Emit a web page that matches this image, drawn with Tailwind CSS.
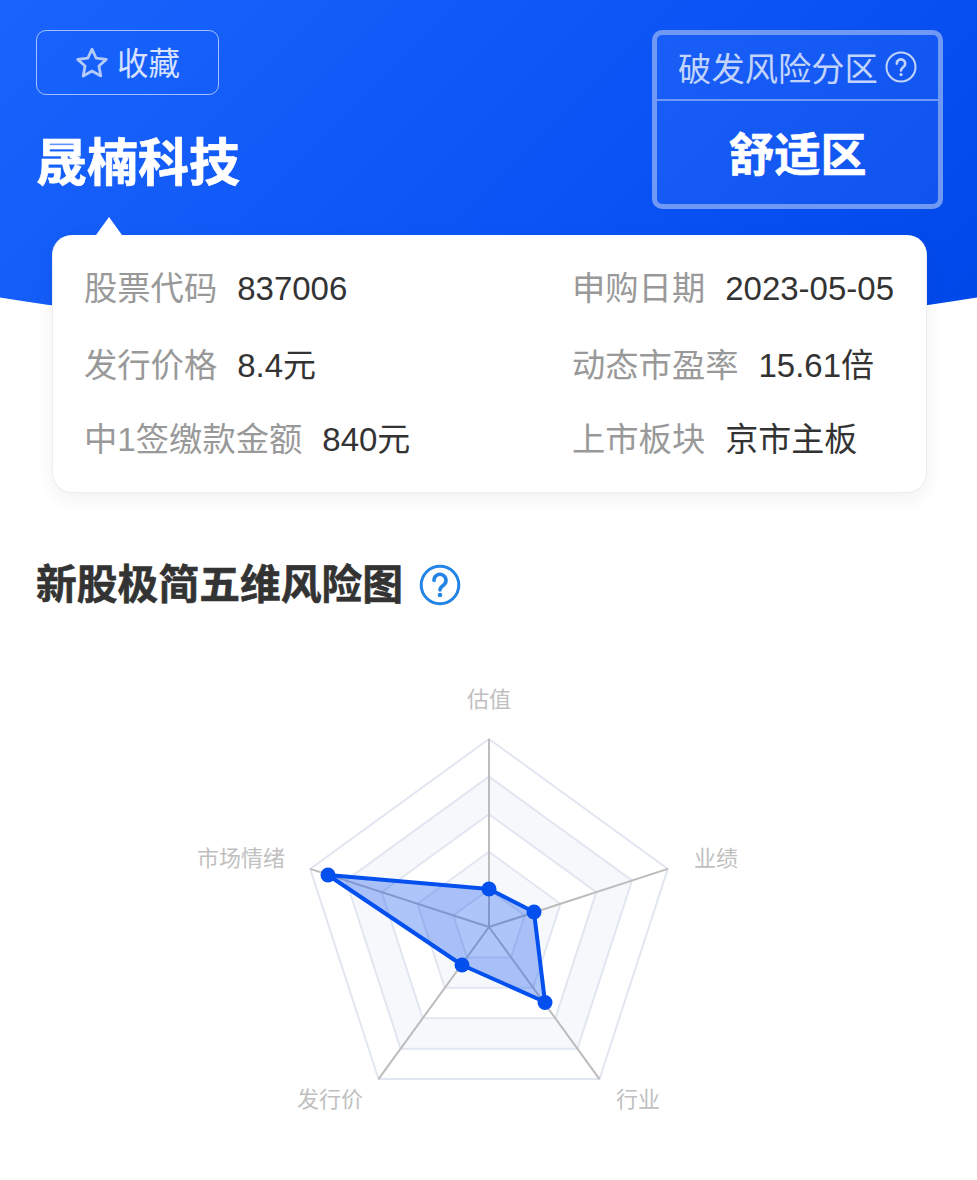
<!DOCTYPE html>
<html lang="zh-CN">
<head>
<meta charset="utf-8">
<script src="https://cdn.jsdelivr.net/npm/@tailwindcss/browser@4"></script>
</head>
<body class="bg-white font-['Liberation_Sans','Noto_Sans_CJK_SC',sans-serif] text-[#333]">
<div class="w-[977px] h-[1180px] overflow-hidden relative">
  <div class="absolute left-[-212px] top-0 w-[1401px] h-[331px] rounded-b-[700px_118px] bg-linear-[135deg,#1a64fc_12%,#0a52f4_60%,#0047e8_88%]"></div>
  <header class="relative h-[306px] px-9 pt-[30px] flex justify-between items-start">
    <div>
      <div class="w-[183px] h-[65px] border border-white/60 rounded-[10px] flex items-center justify-center gap-[8px] text-[#d6e2ff] text-[31.5px]">
        <svg width="34" height="34" viewBox="0 0 32 32" fill="none" stroke="#b4caf9" stroke-width="2.6" stroke-linejoin="round"><path d="M16 3l3.9 8.4 9.6 1.2-7 6.3 1.8 9.3-8.3-4.6-8.3 4.6 1.8-9.3-7-6.3 9.6-1.2z"/></svg>
        <span class="relative top-[2px]">收藏</span>
      </div>
      <h1 class="mt-[36px] text-[51px] leading-[66px] font-bold [-webkit-text-stroke:0.7px_#fff] text-white">晟楠科技</h1>
    </div>
    <div class="w-[291px] h-[179px] mr-[-2px] border-[5px] border-[#7099f6] rounded-[10px] bg-white/5 flex flex-col">
      <div class="h-[66px] border-b-2 border-[#7099f6] flex items-center justify-center gap-[7px] text-[#c2d4fb] text-[33.3px]">
        <span class="relative top-[3px]">破发风险分区</span>
        <svg width="32" height="32" viewBox="0 0 32 32" fill="none" stroke="#c2d4fb" stroke-width="2"><circle cx="16" cy="16" r="14.5"/><path d="M11.8 12.6a4.2 4.2 0 1 1 6.6 3.4c-1.5 1-2.4 1.7-2.4 3.4" stroke-linecap="round" stroke-width="2.6"/><circle cx="16" cy="23.6" r="1.6" fill="#c2d4fb" stroke="none"/></svg>
      </div>
      <div class="flex-1 flex items-center justify-center pt-[6px] text-white font-bold [-webkit-text-stroke:0.7px_#fff] text-[46px]">舒适区</div>
    </div>
  </header>

  <section class="absolute left-[52px] top-[235px] w-[875px] h-[258px] bg-white rounded-[20px] border border-[#eeeeee] border-t-0 shadow-[0_6px_20px_rgba(0,0,0,0.06)] pl-[31px] pt-[30px] text-[33px] leading-[48px]">
    <div class="absolute left-[43px] top-[-18px] w-0 h-0 border-x-[13px] border-x-transparent border-b-[18px] border-b-white"></div>
    <div class="grid grid-cols-[488px_1fr] grid-rows-[77px_74px_48px]">
      <div class="flex gap-[20px]"><span class="text-[#999] text-[33.3px]">股票代码</span><span>837006</span></div>
      <div class="flex gap-[20px]"><span class="text-[#999] text-[33.3px]">申购日期</span><span>2023-05-05</span></div>
      <div class="flex gap-[20px]"><span class="text-[#999] text-[33.3px]">发行价格</span><span>8.4元</span></div>
      <div class="flex gap-[20px]"><span class="text-[#999] text-[33.3px]">动态市盈率</span><span>15.61倍</span></div>
      <div class="flex gap-[20px]"><span class="text-[#999] text-[33.3px]">中1签缴款金额</span><span>840元</span></div>
      <div class="flex gap-[20px]"><span class="text-[#999] text-[33.3px]">上市板块</span><span>京市主板</span></div>
    </div>
  </section>

  <div class="absolute left-9 top-[557px] flex items-center gap-4">
    <h2 class="text-[40.8px] leading-[56px] font-bold [-webkit-text-stroke:0.6px_#333] text-[#333]">新股极简五维风险图</h2>
    <svg width="42" height="42" viewBox="0 0 42 42" fill="none" stroke="#2484e6" stroke-width="3"><circle cx="21" cy="21" r="18.8"/><path d="M15 16.5a6 6 0 1 1 9.4 4.8c-2.2 1.5-3.4 2.4-3.4 4.7" stroke-linecap="round" stroke-width="3.6"/><circle cx="21" cy="31" r="2.3" fill="#2484e6" stroke="none"/></svg>
  </div>

  <svg class="absolute left-0 top-[640px]" width="977" height="500" viewBox="0 640 977 500" font-family="'Liberation Sans','Noto Sans CJK SC',sans-serif" font-size="22" fill="#c0c0c0">
    <path fill-rule="evenodd" fill="#f6f8fb" d="M489 776.6L632 880.5 577.4 1048.7 400.6 1048.7 346 880.5ZM489 814.2L596.3 892.1 555.3 1018.3 422.7 1018.3 381.7 892.1Z"/>
    <path fill-rule="evenodd" fill="#f6f8fb" d="M489 851.8L560.5 903.8 533.2 987.8 444.8 987.8 417.5 903.8ZM489 889.4L524.8 915.4 511.1 957.4 466.9 957.4 453.2 915.4Z"/>
    <g fill="none" stroke="#e1e6f1" stroke-width="2">
      <path d="M489 739L667.8 868.9 599.5 1079.1 378.5 1079.1 310.2 868.9Z"/>
      <path d="M489 776.6L632 880.5 577.4 1048.7 400.6 1048.7 346 880.5Z"/>
      <path d="M489 814.2L596.3 892.1 555.3 1018.3 422.7 1018.3 381.7 892.1Z"/>
      <path d="M489 851.8L560.5 903.8 533.2 987.8 444.8 987.8 417.5 903.8Z"/>
      <path d="M489 889.4L524.8 915.4 511.1 957.4 466.9 957.4 453.2 915.4Z"/>
    </g>
    <g stroke="#bcbcbc" stroke-width="2">
      <path d="M489 927L489 739M489 927L667.8 868.9M489 927L599.5 1079.1M489 927L378.5 1079.1M489 927L310.2 868.9"/>
    </g>
    <path d="M489 889L534 912 545 1002 462 965 328 875Z" fill="#0a50f0" fill-opacity="0.33" stroke="#0450ee" stroke-width="4" stroke-linejoin="round"/>
    <g fill="#0450ee">
      <circle cx="489" cy="889" r="7.5"/><circle cx="534" cy="912" r="7.5"/><circle cx="545" cy="1002.5" r="7.5"/><circle cx="462" cy="965" r="7.5"/><circle cx="328" cy="875" r="7.5"/>
    </g>
    <text x="489" y="707" text-anchor="middle">估值</text>
    <text x="694" y="866">业绩</text>
    <text x="616" y="1107">行业</text>
    <text x="363" y="1107" text-anchor="end">发行价</text>
    <text x="285" y="866" text-anchor="end">市场情绪</text>
  </svg>
</div>
</body>
</html>
